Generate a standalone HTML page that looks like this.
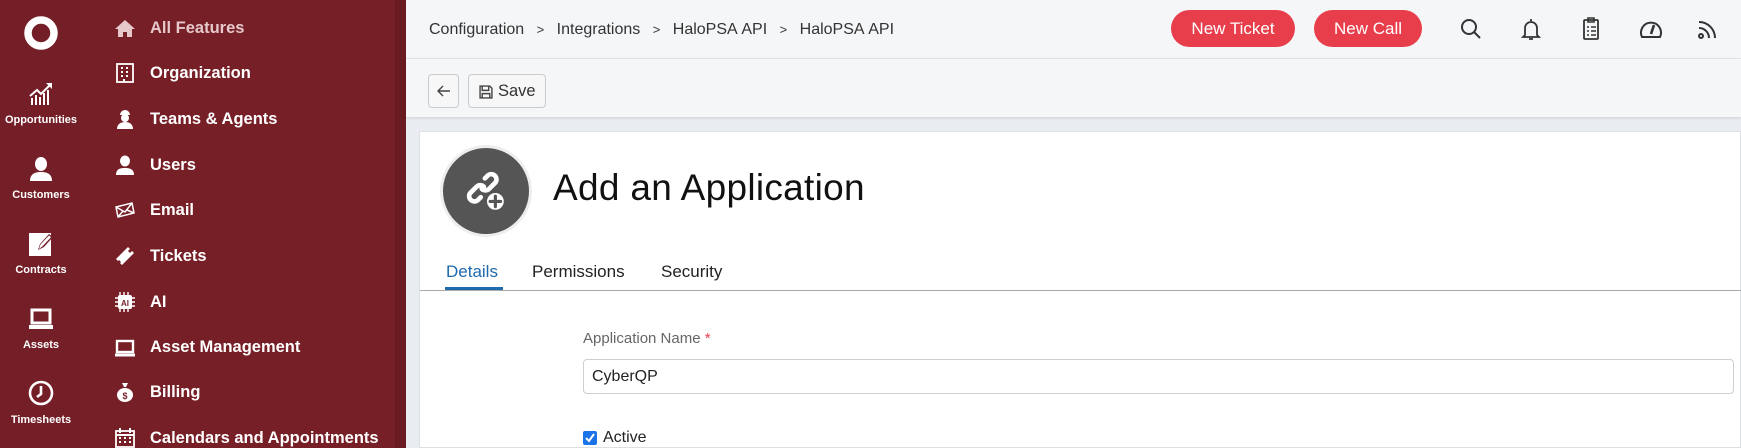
<!DOCTYPE html>
<html><head><meta charset="utf-8"><style>
*{box-sizing:border-box;margin:0;padding:0}
body{width:1741px;height:448px;overflow:hidden;font-family:"Liberation Sans",sans-serif;background:#e9ecf0;position:relative}
.abs{position:absolute}
#rail{left:0;top:0;width:82px;height:448px;background:#741f27}
#menu{left:82px;top:0;width:313px;height:448px;background:#761f27}
#edge{left:395px;top:0;width:11px;height:448px;background:#6a1a21}
.ri{position:absolute;left:0;width:82px;text-align:center;color:#fff;font-size:11px;font-weight:bold}
.mi{position:absolute;left:150px;color:#fff;font-size:16.5px;font-weight:bold;line-height:20px}
.mic{position:absolute;left:115px;width:20px;height:20px}
#top{left:406px;top:0;width:1335px;height:59px;background:#f5f6f8;border-bottom:1px solid #e6e7ea}
#tool{left:406px;top:59px;width:1335px;height:58px;background:#f5f6f8;box-shadow:0 1px 3px rgba(0,0,0,.12)}
.btn{position:absolute;border:1px solid #c9cbcf;border-radius:4px;background:#f7f7f8}
.red{position:absolute;top:10px;height:37px;border-radius:19px;background:#e83e4c;color:#fff;font-size:17px;line-height:37px;text-align:center}
#card{left:419px;top:131px;width:1322px;height:317px;background:#fff;border:1px solid #dcdfe3}
.tab{position:absolute;top:130px;font-size:17px;color:#222}
</style></head><body>
<div id="rail" class="abs">
 <svg class="abs" style="left:24px;top:16px" width="34" height="34" viewBox="0 0 34 34"><circle cx="17" cy="17" r="13" fill="none" stroke="#fff" stroke-width="7.5"/></svg>
 <svg class="abs" style="left:29px;top:82px" width="24" height="24" viewBox="0 0 24 24" fill="#fff"><rect x="2" y="16" width="2" height="7"/><rect x="6" y="13" width="2" height="10"/><rect x="10" y="15" width="2" height="8"/><rect x="14" y="11" width="2" height="12"/><rect x="18" y="8" width="2" height="15"/><path d="M1 14 L8 8 L12 12 L21 3" stroke="#fff" stroke-width="2" fill="none"/><path d="M17 1h6v6z"/></svg>
 <div class="ri" style="top:114px">Opportunities</div>
 <svg class="abs" style="left:29px;top:156px" width="24" height="26" viewBox="0 0 24 26" fill="#fff"><ellipse cx="12" cy="8" rx="6" ry="7"/><path d="M1 25c0-7 5-9 11-9s11 2 11 9z"/></svg>
 <div class="ri" style="top:189px">Customers</div>
 <svg class="abs" style="left:29px;top:231px" width="26" height="26" viewBox="0 0 26 26"><rect x="0" y="2" width="22" height="23" fill="#fff"/><path d="M9 19l2-6 9-10 4 3-9 10z" fill="#741f27"/><path d="M10 18l1.5-4.5 8.5-9 2 1.8-8.5 9z" fill="#fff"/></svg>
 <div class="ri" style="top:264px">Contracts</div>
 <svg class="abs" style="left:29px;top:308px" width="24" height="22" viewBox="0 0 24 22" fill="none" stroke="#fff" stroke-width="3"><rect x="3" y="2" width="18" height="13"/><path d="M0 19h24" stroke-width="4"/></svg>
 <div class="ri" style="top:339px">Assets</div>
 <svg class="abs" style="left:28px;top:380px" width="26" height="26" viewBox="0 0 26 26" fill="none" stroke="#fff" stroke-width="2.6"><circle cx="13" cy="13" r="11"/><path d="M13 6v8l-4 3"/></svg>
 <div class="ri" style="top:414px">Timesheets</div>
</div>
<div id="menu" class="abs"></div>
<div id="edge" class="abs"></div>
<svg class="mic" style="top:18px" viewBox="0 0 20 20" fill="#e6c8cb"><path d="M10 2L0 11h3v8h5v-5h4v5h5v-8h3z"/></svg>
<div class="mi" style="top:18px;color:#e6c8cb">All Features</div>
<svg class="mic" style="top:63px" viewBox="0 0 20 20" fill="none" stroke="#fff" stroke-width="1.8"><rect x="2" y="1" width="16" height="18"/><path d="M6 5h2M11 5h2M6 9h2M11 9h2M6 13h2M11 13h2M9 16v3" stroke-width="2"/></svg>
<div class="mi" style="top:63px">Organization</div>
<svg class="mic" style="top:109px" viewBox="0 0 20 20" fill="#fff"><path d="M5 6a5 5 0 0110 0z"/><ellipse cx="10" cy="9" rx="4" ry="4"/><path d="M2 20c0-5 4-7 8-7s8 2 8 7z"/></svg>
<div class="mi" style="top:109px">Teams &amp; Agents</div>
<svg class="mic" style="top:155px" viewBox="0 0 20 20" fill="#fff"><ellipse cx="10" cy="6" rx="5" ry="5.5"/><path d="M1 20c0-6 4-7 9-7s9 1 9 7z"/></svg>
<div class="mi" style="top:155px">Users</div>
<svg class="mic" style="top:200px" viewBox="0 0 20 20" fill="none" stroke="#fff" stroke-width="1.5"><path d="M1 7l16-4 2 10-16 4z M1 7l9 5 7-9 M3 17l5-6 M19 13l-7-3"/></svg>
<div class="mi" style="top:200px">Email</div>
<svg class="mic" style="top:246px" viewBox="0 0 20 20" fill="#fff"><path d="M1 13L13 1l2 2-2 2 2 2 2-2 2 2L7 19l-2-2 1-1-2-2-1 1z"/></svg>
<div class="mi" style="top:246px">Tickets</div>
<svg class="mic" style="top:292px" viewBox="0 0 20 20"><rect x="3" y="3" width="14" height="14" rx="2" fill="#fff"/><path d="M5 0v3M9 0v3M13 0v3M5 17v3M9 17v3M13 17v3M0 6h3M0 10h3M0 14h3M17 6h3M17 10h3M17 14h3" stroke="#fff" stroke-width="1.4"/><text x="10" y="14" font-size="8" font-weight="bold" text-anchor="middle" fill="#761f27" font-family="Liberation Sans">AI</text></svg>
<div class="mi" style="top:292px">AI</div>
<svg class="mic" style="top:338px" viewBox="0 0 20 20" fill="none" stroke="#fff" stroke-width="2.4"><rect x="2" y="3" width="16" height="11"/><path d="M0 17h20" stroke-width="3"/></svg>
<div class="mi" style="top:337px">Asset Management</div>
<svg class="mic" style="top:382px" viewBox="0 0 20 20" fill="#fff"><path d="M7 1h6l-2 4H9z"/><ellipse cx="10" cy="13" rx="8" ry="7"/><text x="10" y="17" font-size="9" font-weight="bold" text-anchor="middle" fill="#761f27" font-family="Liberation Sans">$</text></svg>
<div class="mi" style="top:382px">Billing</div>
<svg class="mic" style="top:428px" viewBox="0 0 20 20" fill="none" stroke="#fff" stroke-width="1.8"><rect x="1" y="3" width="18" height="16"/><path d="M5 0v5M15 0v5M1 7h18M4 10h2M9 10h2M14 10h2M4 14h2M9 14h2M14 14h2" stroke-width="2"/></svg>
<div class="mi" style="top:428px">Calendars and Appointments</div>

<div id="top" class="abs"></div>
<div class="abs" style="left:429px;top:21px;font-size:16px;color:#333;white-space:nowrap;word-spacing:1px">Configuration <span style="margin:0 7px;font-size:13px">&gt;</span> Integrations <span style="margin:0 7px;font-size:13px">&gt;</span> HaloPSA API <span style="margin:0 7px;font-size:13px">&gt;</span> HaloPSA API</div>
<div class="red" style="left:1171px;width:124px">New Ticket</div>
<div class="red" style="left:1314px;width:108px">New Call</div>
<svg class="abs" style="left:1460px;top:18px" width="22" height="22" viewBox="0 0 22 22" fill="none" stroke="#333" stroke-width="2"><circle cx="9" cy="9" r="7"/><path d="M14 14l6 6"/></svg>
<svg class="abs" style="left:1521px;top:17px" width="20" height="24" viewBox="0 0 20 24" fill="none" stroke="#333" stroke-width="1.8"><path d="M10 2v2M4 18V11a6 6 0 0112 0v7l2 2H2z M8 22h4"/></svg>
<svg class="abs" style="left:1582px;top:17px" width="18" height="24" viewBox="0 0 18 24" fill="none" stroke="#333" stroke-width="1.8"><rect x="2" y="3" width="14" height="19" rx="1"/><path d="M6 1h6v4H6z M5 10h2M9 10h5M5 14h2M9 14h5M5 18h2M9 18h5" stroke-width="1.6"/></svg>
<svg class="abs" style="left:1639px;top:18px" width="24" height="22" viewBox="0 0 24 22" fill="none" stroke="#333" stroke-width="2"><path d="M3 19a10 10 0 1118 0z"/><path d="M12 16l3-9" stroke-width="2.6"/></svg>
<svg class="abs" style="left:1698px;top:19px" width="20" height="20" viewBox="0 0 20 20" fill="none" stroke="#333" stroke-width="2"><circle cx="3" cy="17" r="2"/><path d="M1 9a10 10 0 0110 10M1 3a16 16 0 0116 16"/></svg>

<div id="tool" class="abs"></div>
<div class="btn" style="left:428px;top:74px;width:31px;height:34px"><svg class="abs" style="left:8px;top:10px" width="14" height="12" viewBox="0 0 14 12" fill="none" stroke="#444" stroke-width="1.4"><path d="M13 6H1M6 1L1 6l5 5"/></svg></div>
<div class="btn" style="left:468px;top:74px;width:78px;height:34px"><svg class="abs" style="left:10px;top:10px" width="14" height="14" viewBox="0 0 13 13" fill="none" stroke="#444" stroke-width="1.3"><path d="M1 1h9l2 2v9H1z M3 1v4h6V1 M3 12V8h7v4"/></svg><span class="abs" style="left:29px;top:7px;font-size:16.5px;color:#333">Save</span></div>

<div id="card" class="abs">
 <div class="abs" style="left:20px;top:13px;width:92px;height:92px;border-radius:50%;background:#555;border:3px solid #eee"></div>
 <svg class="abs" style="left:46px;top:38px" width="42" height="44" viewBox="0 0 40 42" fill="none" stroke="#fff" stroke-width="4.5" stroke-linecap="round"><path d="M18 8l3-3a5 5 0 017 7l-6 6a5 5 0 01-7 0"/><path d="M14 26l-3 3a5 5 0 01-7-7l6-6a5 5 0 017 0"/><circle cx="28" cy="30" r="9" fill="#fff" stroke="#555" stroke-width="2"/><path d="M28 25v10M23 30h10" stroke="#555" stroke-width="3"/></svg>
 <div class="abs" style="left:133px;top:35px;font-size:37px;color:#111;white-space:nowrap;letter-spacing:0.3px">Add an Application</div>
 <div class="tab" style="left:26px;color:#1d6aad">Details</div>
 <div class="abs" style="left:25px;top:155px;width:58px;height:3px;background:#1d6aad"></div>
 <div class="tab" style="left:112px">Permissions</div>
 <div class="tab" style="left:241px">Security</div>
 <div class="abs" style="left:0;top:158px;width:1322px;height:1px;background:#aaa"></div>
 <div class="abs" style="left:163px;top:198px;font-size:15px;color:#666">Application Name <span style="color:#e83e4c">*</span></div>
 <div class="abs" style="left:163px;top:227px;width:1151px;height:35px;border:1px solid #cfcfcf;border-radius:4px"><span class="abs" style="left:8px;top:8px;font-size:16px;color:#222">CyberQP</span></div>
 <div class="abs" style="left:163px;top:299px;width:14px;height:14px;border-radius:2px;background:#1a73e8"><svg class="abs" style="left:2px;top:2px" width="10" height="10" viewBox="0 0 10 10" fill="none" stroke="#fff" stroke-width="2"><path d="M1 5l3 3 5-7"/></svg></div>
 <div class="abs" style="left:183px;top:297px;font-size:16px;color:#222">Active</div>
</div>
</body></html>
